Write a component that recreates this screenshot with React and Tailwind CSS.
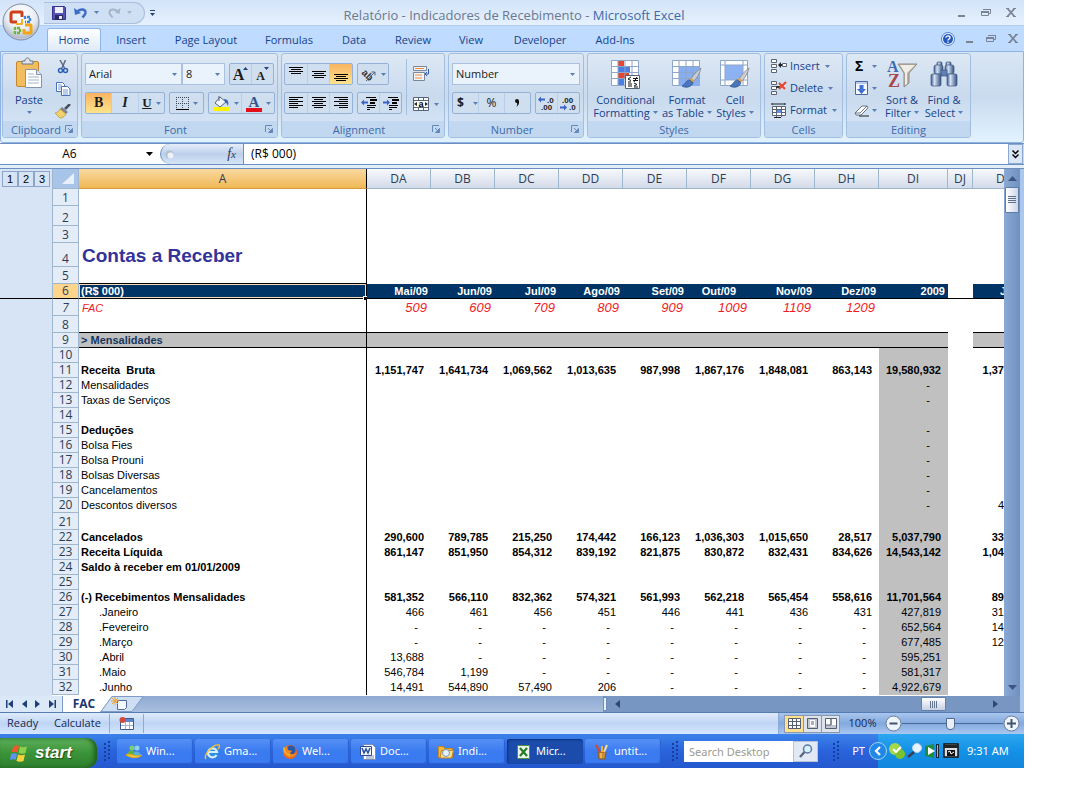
import React from "react";

const UI = "font-['Open_Sans','Noto_Sans',sans-serif]";
const SHEET = "font-['Liberation_Sans',Arial,sans-serif]";

function Down({ className = "text-[#5a7fb5]" }) {
  return (
    <svg width="5" height="3" viewBox="0 0 5 3" className={`shrink-0 ${className}`} aria-hidden="true">
      <path d="M0 0h5L2.5 3z" fill="currentColor" />
    </svg>
  );
}

function Svg({ w, h, children, className = "" }) {
  return (
    <svg width={w} height={h} viewBox={`0 0 ${w} ${h}`} className={`shrink-0 ${className}`} aria-hidden="true">
      {children}
    </svg>
  );
}

/* ---------- window chrome ---------- */

function OfficeOrb() {
  return (
    <Svg w={38} h={38}>
      <defs>
        <radialGradient id="orb" cx="50%" cy="30%" r="75%">
          <stop offset="0" stopColor="#ffffff" />
          <stop offset="0.55" stopColor="#e9edf3" />
          <stop offset="0.85" stopColor="#b3bccb" />
          <stop offset="1" stopColor="#e6ebf2" />
        </radialGradient>
      </defs>
      <circle cx="19" cy="19" r="18" fill="url(#orb)" stroke="#7d8ba3" strokeWidth="1" />
      <g fill="none" strokeLinejoin="round">
        <path d="M15 19h-5q-1 0-1-1v-7q0-2 2-2h8q1 0 1 1v4" stroke="#cf3f1c" strokeWidth="3" />
        <path d="M23 16v-2h5v5h-5" stroke="#3b86d8" strokeWidth="2.400" strokeDasharray="3 1" />
        <path d="M23 22h6v7q0 1-1 1h-6v-4" stroke="#f2a516" strokeWidth="3" />
        <path d="M13 24v6h5v-5h-5" stroke="#6fb53a" strokeWidth="2.400" strokeDasharray="3 1" />
        <path d="M14 21h6v-5" stroke="#efb229" strokeWidth="2" />
      </g>
    </Svg>
  );
}

function WindowButtons() {
  return (
    <>
      <button aria-label="Minimize" className="flex h-4 w-4 items-center justify-center">
        <Svg w={9} h={9}><path d="M1 7h7v2H1z" fill="#7a8494" /></Svg>
      </button>
      <button aria-label="Restore" className="flex h-4 w-4 items-center justify-center">
        <Svg w={10} h={9}>
          <path d="M2.500 2V1.500h7v4H8" fill="none" stroke="#7a8494" />
          <path d="M0.500 3.500h7v4h-7z" fill="none" stroke="#7a8494" />
          <path d="M0 3h8v2H0zM2 1h8v1H2z" fill="#7a8494" />
        </Svg>
      </button>
      <button aria-label="Close" className="flex h-4 w-4 items-center justify-center">
        <Svg w={10} h={9}><path d="M1.500 0.500l7 8M8.500 0.500l-7 8" stroke="#7a8494" strokeWidth="1.800" /><path d="M0 0.500h3M7 0.500h3M0 8.500h3M7 8.500h3" stroke="#7a8494" /></Svg>
      </button>
    </>
  );
}

function TitleBar() {
  return (
    <header className="flex h-[26px] items-center border-b border-[#b0cdf2] bg-linear-to-b from-[#d3e3f8] via-[#dceafb] to-[#e6f1fe] pl-[44px] pr-[5px]">
      <div className="flex h-[22px] items-center rounded-r-full border border-l-0 border-[#a9bfdd] bg-[#cfdff4] pl-2 pr-3">
        <button aria-label="Save">
          <Svg w={14} h={14}>
            <path d="M0.500 0.500h12l1 1v12h-13z" fill="#5753b5" stroke="#37338c" />
            <path d="M3 1h8v6H3z" fill="#eef1fb" />
            <path d="M3 9h8v5H3z" fill="#2c2a66" />
            <path d="M7 10h3v3H7z" fill="#e8ecf8" />
          </Svg>
        </button>
        <button aria-label="Undo" className="ml-2 flex items-center gap-[6px]">
          <Svg w={14} h={12}>
            <path d="M3 5c3-4 9-3 8.500 1c-0.300 2-2 3-3 4.500" fill="none" stroke="#3c6cc8" strokeWidth="2.400" />
            <path d="M0 1l1 7 6-2z" fill="#3c6cc8" />
          </Svg>
          <Down />
        </button>
        <button aria-label="Redo" className="ml-2 flex items-center gap-[6px]">
          <Svg w={14} h={12}>
            <path d="M11 5c-3-4-9-3-8.500 1c0.300 2 2 3 3 4.500" fill="none" stroke="#a8b4c8" strokeWidth="2" />
            <path d="M13.500 1l-1 6-5-2z" fill="#a8b4c8" />
          </Svg>
          <Down className="text-[#a8b4c8]" />
        </button>
      </div>
      <button aria-label="Customize toolbar" className="ml-[5px] flex flex-col items-center gap-[2px]">
        <span className="h-px w-[5px] bg-[#27427a]" />
        <Down className="text-[#27427a]" />
      </button>
      <h1 className="flex-1 pr-[80px] pt-1 text-center text-[13px] leading-[16px] text-[#6b7890]">
        Relatório - Indicadores de Recebimento - <span className="text-[#3e6aaa]">Microsoft Excel</span>
      </h1>
      <div className="flex items-center gap-[9px]"><WindowButtons /></div>
    </header>
  );
}

const TABS = [
  ["Insert", "w-[58px]"],
  ["Page Layout", "w-[92px]"],
  ["Formulas", "w-[74px]"],
  ["Data", "w-[56px]"],
  ["Review", "w-[62px]"],
  ["View", "w-[54px]"],
  ["Developer", "w-[84px]"],
  ["Add-Ins", "w-[66px]"],
];

function TabBar() {
  return (
    <nav className="flex h-[25px] items-end bg-[#bfdbff] pl-[47px] text-[11px] text-[#15428b]">
      <a href="#home" className="mr-px h-[23px] w-[54px] rounded-t-[3px] border border-b-0 border-[#8fb5e6] bg-linear-to-b from-white to-[#dfeaf7] text-center leading-[22px]">
        Home
      </a>
      {TABS.map(([t, w]) => (
        <a key={t} href="#ribbon" className={`${w} h-[23px] whitespace-nowrap text-center leading-[24px]`}>{t}</a>
      ))}
      <div className="flex h-full flex-1 items-center justify-end gap-[6px] pr-[3px]">
        <button aria-label="Help">
          <Svg w={14} h={14}>
            <circle cx="7" cy="7" r="6.500" fill="#e9f2ff" stroke="#5683cc" />
            <circle cx="7" cy="7" r="5" fill="#2459bd" />
            <path d="M5 5.800c0-2.700 4.200-2.500 4 0c0 1.200-2 1.200-2 2.600M7 9.400v1.400" stroke="#fff" strokeWidth="1.400" fill="none" />
          </Svg>
        </button>
        <WindowButtons />
      </div>
    </nav>
  );
}

/* ---------- ribbon ---------- */

function Group({ label, width, launcher, children }) {
  return (
    <section aria-label={label} className={`${width} flex h-[85px] shrink-0 flex-col overflow-hidden rounded-[3px] border border-[#a3bfdf] bg-linear-to-b from-[#dee8f4] via-[#c9daee] to-[#d9e8f8]`}>
      <div className="flex min-h-0 flex-1">{children}</div>
      <div className="flex h-[16px] items-center bg-[#c1d8f0] px-1 text-[11px] leading-[16px] text-[#3e6aaa]">
        <span className="flex-1 pt-px text-center">{label}</span>
        {launcher && (
          <button aria-label={`${label} options`}>
            <Svg w={8} h={8}>
              <path d="M0.500 7V0.500H7" fill="none" stroke="#6688b8" />
              <path d="M3 3l3 3M7.500 3.500v4h-4z" fill="#6688b8" stroke="#6688b8" />
            </Svg>
          </button>
        )}
      </div>
    </section>
  );
}

function Cluster({ width = "", children }) {
  return (
    <div className={`${width} flex h-[22px] shrink-0 divide-x divide-[#b9cfe9] overflow-hidden rounded-[2px] border border-[#94b1d6] bg-[#d0dff0]`}>
      {children}
    </div>
  );
}

function Tool({ label, active, children }) {
  return (
    <button aria-label={label} className={`flex flex-1 items-center justify-center gap-1 ${active ? "bg-linear-to-b from-[#f9b462] to-[#fde38c]" : ""}`}>
      {children}
    </button>
  );
}

function Pick({ id, label, value, width }) {
  return (
    <div className={`${width} relative flex h-[22px] items-center border border-[#a9c1de] bg-[#eaf2fb]`}>
      <label htmlFor={id} className="sr-only">{label}</label>
      <select id={id} defaultValue={value} className="w-full appearance-none bg-transparent pl-[3px] text-[11px] leading-[18px] text-[#1c1c1c]">
        <option>{value}</option>
      </select>
      <Down className="pointer-events-none absolute right-[4px] top-[9px] text-[#5a7fb5]" />
    </div>
  );
}

function Lines({ xs, y = 0 }) {
  return (
    <Svg w={14} h={14}>
      {xs.map(([x, w], i) => <rect key={i} x={x} y={y + i * 2} width={w} height="1" fill="#000" />)}
    </Svg>
  );
}

function AlignLines({ kind }) {
  const widths = [14, 9, 14, 9, 14, 9];
  return (
    <Svg w={14} h={12}>
      {widths.map((w, i) => (
        <rect key={i} x={kind === "left" ? 0 : kind === "center" ? Math.floor((14 - w) / 2) : 14 - w} y={i * 2} width={w} height="1" fill="#000" />
      ))}
    </Svg>
  );
}

function Indent({ out }) {
  return (
    <Svg w={16} h={13}>
      <path d="M5 0h10v1H5zM9 2h7v2H9zM9 5h5v2H9zM6 8h9v1H6zM6 10h8v1H6zM6 12h3v1H6z" fill="#000" />
      <path d={out ? "M0 5.500l3-3v2h4v2H3v2z" : "M7 5.500l-3-3v2H0v2h4v2z"} fill="#3a63c8" />
    </Svg>
  );
}

function GridIcon({ tint, brush, cond }) {
  return (
    <Svg w={30} h={29}>
      <path d="M0.500 0.500h27v25h-27z" fill="#fff" stroke="#8ea6c8" />
      {tint === "table" && <path d="M7 6h21v20H7z" fill="#86aef0" />}
      {tint === "cell" && <path d="M5 5h18v15H5z" fill="#8db2f2" />}
      {cond && (
        <>
          <path d="M7 1h6v5H7zM7 13h11v5H7z" fill="#e8472e" />
          <path d="M7 7h12v5H7zM7 19h6v6H7z" fill="#4c7fe4" />
        </>
      )}
      <path
        d={tint === "cell" ? "M5 0v26M23 0v26M0 5h28M0 20h28" : "M7 0v26M14 0v26M21 0v26M0 6.500h28M0 12.500h28M0 18.500h28"}
        fill="none" stroke="#8ea6c8"
      />
      {cond && (
        <>
          <path d="M14.500 15.500h14v13h-14z" fill="#fff" stroke="#55616f" />
          <path d="M20 17l-3 2 3 1.500M17 22h3M22 18.500h5M22 20.500h5M26 17l-3 5M17 24h4M17 26h4M23 23l3 1.500-3 1.500M23 27h4" fill="none" stroke="#111" />
        </>
      )}
      {brush && (
        <>
          <path d="M29 8c-4 3-8 7-10 11l3 2c3-3 6-8 7-13z" fill="#c9ccd2" stroke="#767c88" strokeWidth="0.700" />
          <path d="M19 18l3.500 2.500-1.500 2-3.500-2z" fill="#e8a33b" />
          <path d="M17.500 20c-3 0-4 4-7.500 6 4 2.500 10 1 11-3.500z" fill="#4a76bd" stroke="#2c4f8e" strokeWidth="0.700" />
        </>
      )}
    </Svg>
  );
}

function BigTool({ icon, lines, width }) {
  return (
    <button className={`${width} flex flex-col items-center pt-[5px] text-[11px] leading-[13px] text-[#15428b]`}>
      <span className="mb-1 flex h-[30px] items-center">{icon}</span>
      <span className="whitespace-nowrap">{lines[0]}</span>
      <span className="flex items-center gap-[3px] whitespace-nowrap">{lines[1]}<Down /></span>
    </button>
  );
}

function SmallTool({ icon, text, label }) {
  return (
    <button aria-label={label} className="flex h-[22px] items-center gap-[3px] text-[11px] text-[#15428b]">
      {icon}
      {text && <span className="pr-[2px]">{text}</span>}
      <Down />
    </button>
  );
}

function Clipboard() {
  return (
    <Group label="Clipboard" width="w-[76px]" launcher>
      <button className="flex w-[52px] flex-col items-center pt-[3px] text-[11px] leading-[14px] text-[#15428b]">
        <Svg w={28} h={32}>
          <rect x="1.500" y="4.500" width="22" height="25" rx="1.500" fill="#f1bd5e" stroke="#c4872b" />
          <path d="M7 7V4h3c0-4 5-4 5 0h3v3z" fill="#dfe3ea" stroke="#6b7585" />
          <path d="M10.500 12.500h11l5 5v13h-16z" fill="#fff" stroke="#8594ac" />
          <path d="M21.500 12.500v5h5" fill="#dbe4f2" stroke="#8594ac" />
          <path d="M13 17h6M13 20h11M13 23h11M13 26h11" stroke="#9fb2cf" />
        </Svg>
        <span className="mt-1">Paste</span>
        <Down className="mt-1 text-[#5a7fb5]" />
      </button>
      <div className="flex flex-col items-center gap-2 pt-[6px]">
        <button aria-label="Cut">
          <Svg w={14} h={14}>
            <path d="M4 0l4.500 8M9.500 0L6 8" stroke="#5b6b85" strokeWidth="1.500" />
            <circle cx="4.500" cy="10.500" r="2" fill="none" stroke="#2e5fb4" strokeWidth="1.500" />
            <circle cx="9.500" cy="10.500" r="2" fill="none" stroke="#2e5fb4" strokeWidth="1.500" />
          </Svg>
        </button>
        <button aria-label="Copy">
          <Svg w={16} h={14}>
            <path d="M1.500 0.500h6l2 2v7h-8z" fill="#fff" stroke="#4a72b8" />
            <path d="M3 3h4M3 5h4M3 7h3" stroke="#7a9bd3" />
            <path d="M6.500 4.500h6l2.500 2.500v6.500H6.500z" fill="#fff" stroke="#4a72b8" />
            <path d="M8 8h5M8 10h5M8 12h5" stroke="#7a9bd3" />
          </Svg>
        </button>
        <button aria-label="Format Painter">
          <Svg w={16} h={15}>
            <path d="M15 0l-5 5" stroke="#4b4f5c" strokeWidth="2.500" />
            <path d="M7 3l6 5-2 2-6-5z" fill="#7d828f" />
            <path d="M5 5l6 5c-2 3-4 4-6 4L0 9c2 0 4-2 5-4z" fill="#f2d36b" stroke="#b78b26" strokeWidth="0.700" />
          </Svg>
        </button>
      </div>
    </Group>
  );
}

function FontGroup() {
  const glyph = "font-['Liberation_Serif',serif] font-bold text-[#1c1c1c]";
  return (
    <Group label="Font" width="w-[197px]" launcher>
      <div className="flex flex-col gap-[7px] px-[3px] pt-[9px]">
        <div className="flex gap-1">
          <div className="flex">
            <Pick id="font-name" label="Font name" value="Arial" width="w-[97px]" />
            <Pick id="font-size" label="Font size" value="8" width="w-[43px]" />
          </div>
          <Cluster width="w-[45px]">
            <Tool label="Grow font">
              <span className={`${glyph} pt-[2px] text-[16px] leading-[18px]`}>A</span>
              <Svg w={5} h={14} className="-ml-[5px]"><path d="M0 3h5L2.500 0z" fill="#27427a" /></Svg>
            </Tool>
            <Tool label="Shrink font">
              <span className={`${glyph} pt-1 text-[12px] leading-[16px]`}>A</span>
              <Svg w={5} h={14} className="-ml-[5px]"><path d="M0 0h5L2.500 3z" fill="#27427a" /></Svg>
            </Tool>
          </Cluster>
        </div>
        <div className="flex gap-1">
          <Cluster width="w-[80px]">
            <Tool label="Bold" active><b className={`${glyph} text-[14px] leading-[18px]`}>B</b></Tool>
            <Tool label="Italic"><i className={`${glyph} text-[14px] leading-[18px]`}>I</i></Tool>
            <Tool label="Underline"><u className={`${glyph} text-[13px] leading-[18px]`}>U</u><Down /></Tool>
          </Cluster>
          <Cluster width="w-[35px]">
            <Tool label="Borders">
              <Svg w={13} h={13}>
                <path d="M0.500 0v12M6.500 0v12M12.500 0v12M0 0.500h13M0 6.500h13" stroke="#3c4658" strokeDasharray="1 1" fill="none" />
                <path d="M0 12h13v1H0z" fill="#000" />
              </Svg>
              <Down />
            </Tool>
          </Cluster>
          <Cluster width="w-[67px]">
            <Tool label="Fill color">
              <Svg w={18} h={16}>
                <path d="M8 2l6 5-6 5-5-4z" fill="#f3f6fb" stroke="#55657f" />
                <path d="M7 1v5" stroke="#55657f" />
                <path d="M12 4c4 0 5 3 4 7-1-2-1-3-3-4z" fill="#3464bd" />
                <path d="M1 12h16v4H1z" fill="#fff200" />
              </Svg>
              <Down />
            </Tool>
            <Tool label="Font color">
              <Svg w={16} h={17}>
                <text x="8" y="12" textAnchor="middle" fontFamily="Liberation Serif, serif" fontWeight="bold" fontSize="15" fill="#34568f">A</text>
                <path d="M0 13h16v4H0z" fill="#e3101c" />
              </Svg>
              <Down />
            </Tool>
          </Cluster>
        </div>
      </div>
    </Group>
  );
}

function Alignment() {
  return (
    <Group label="Alignment" width="w-[164px]" launcher>
      <div className="flex flex-col gap-[7px] pl-[2px] pt-[9px]">
        <div className="flex gap-1">
          <Cluster width="w-[69px]">
            <Tool label="Top align"><Lines y={0} xs={[[0, 14], [2, 10], [0, 14], [2, 10]]} /></Tool>
            <Tool label="Middle align"><Lines y={4} xs={[[0, 14], [2, 10], [0, 14], [2, 10]]} /></Tool>
            <Tool label="Bottom align" active><Lines y={7} xs={[[0, 14], [2, 10], [0, 14], [2, 10]]} /></Tool>
          </Cluster>
          <Cluster width="w-[32px]">
            <Tool label="Orientation">
              <Svg w={16} h={15}>
                <text x="1" y="10" transform="rotate(45 5 7)" fontFamily="Liberation Sans, sans-serif" fontWeight="bold" fontSize="10" fill="#333">ab</text>
                <path d="M5 14l9-9M10.500 5H14v3.500" stroke="#55657f" fill="none" />
              </Svg>
              <Down />
            </Tool>
          </Cluster>
        </div>
        <div className="flex gap-1">
          <Cluster width="w-[69px]">
            <Tool label="Align left"><AlignLines kind="left" /></Tool>
            <Tool label="Center"><AlignLines kind="center" /></Tool>
            <Tool label="Align right"><AlignLines kind="right" /></Tool>
          </Cluster>
          <Cluster width="w-[45px]">
            <Tool label="Decrease indent"><Indent out /></Tool>
            <Tool label="Increase indent"><Indent /></Tool>
          </Cluster>
        </div>
      </div>
      <div className="ml-1 mt-[5px] flex h-[56px] flex-col justify-between border-l border-[#a3bfdf] pb-[3px] pl-[6px] pt-[7px]">
        <button aria-label="Wrap text">
          <Svg w={16} h={15}>
            <path d="M0.500 0.500h13v4h-13z" fill="#f4f6fa" stroke="#7d8797" />
            <path d="M2 2.500h9" stroke="#e98a3c" />
            <path d="M0.500 6.500h11v8H0.500z" fill="#f4f6fa" stroke="#7d8797" />
            <path d="M2 9h7M2 12h7" stroke="#e98a3c" />
            <path d="M15.500 3v5h-3M14 6l-2 2 2 2" stroke="#2d5fb8" fill="none" />
          </Svg>
        </button>
        <button aria-label="Merge and center" className="flex items-center gap-[5px]">
          <Svg w={16} h={15}>
            <path d="M0.500 0.500h15v13H0.500z" fill="#fff" stroke="#55657f" />
            <path d="M0 3.500h16M0 10.500h16M5.500 0v3M10.500 0v3M5.500 11v3M10.500 11v3" stroke="#55657f" />
            <path d="M1 7l3-2v4zM15 7l-3-2v4z" fill="#222" />
            <text x="8" y="10" textAnchor="middle" fontFamily="Liberation Sans, sans-serif" fontWeight="bold" fontSize="9" fill="#000">a</text>
          </Svg>
          <Down />
        </button>
      </div>
    </Group>
  );
}

function NumberGroup() {
  return (
    <Group label="Number" width="w-[136px]" launcher>
      <div className="flex flex-col gap-[7px] pl-[3px] pt-[9px]">
        <Pick id="number-format" label="Number format" value="Number" width="w-[128px]" />
        <div className="flex gap-1">
          <Cluster width="w-[79px]">
            <Tool label="Currency"><b className="pl-1 pr-[5px] text-[12px] text-[#1c1c1c]">$</b><Down /></Tool>
            <Tool label="Percent"><span className="text-[12px] text-[#1c1c1c]">%</span></Tool>
            <Tool label="Comma"><Svg w={5} h={8}><path d="M0 2a2 2 0 014 0c0.500 3-1 5-3 6 1-1 1.500-2.500 1-4a2 2 0 01-2-2z" fill="#111" /></Svg></Tool>
          </Cluster>
          <Cluster width="w-[45px]">
            <Tool label="Increase decimal">
              <Svg w={17} h={15}>
                <path d="M0 3.500l3-3v2h4v2H3v2z" fill="#3a63c8" />
                <text x="9" y="7" fontFamily="Liberation Sans, sans-serif" fontWeight="bold" fontSize="8" fill="#222">.0</text>
                <text x="3" y="14" fontFamily="Liberation Sans, sans-serif" fontWeight="bold" fontSize="8" fill="#222">.00</text>
              </Svg>
            </Tool>
            <Tool label="Decrease decimal">
              <Svg w={17} h={15}>
                <text x="2" y="7" fontFamily="Liberation Sans, sans-serif" fontWeight="bold" fontSize="8" fill="#222">.00</text>
                <path d="M7 11.500l-3-3v2H0v2h4v2z" fill="#3a63c8" />
                <text x="9" y="14" fontFamily="Liberation Sans, sans-serif" fontWeight="bold" fontSize="8" fill="#222">.0</text>
              </Svg>
            </Tool>
          </Cluster>
        </div>
      </div>
    </Group>
  );
}

function CellsIcon({ kind }) {
  return (
    <Svg w={16} h={15}>
      {kind === "format" ? (
        <>
          <path d="M1.500 3.500h13v9h-13zM1.500 6.500h13M1.500 9.500h13M5.500 3v11M10.500 3v11" fill="#fff" stroke="#5a6473" />
          <path d="M6 7h4v3H6z" fill="#5d8eea" />
          <path d="M1 0v2M14 0v2M1 1h13M3 14.500h7" stroke="#222" />
        </>
      ) : (
        <>
          <path d="M0.500 0.500h5v3h-5zM0.500 5.500h5v3h-5zM0.500 10.500h5v3h-5z" fill="#fff" stroke="#5a6473" />
          {kind === "insert" ? (
            <>
              <path d="M7 6l3-3v2h1v2h-1v2z" fill="#222" />
              <path d="M11.500 4.500h4v3h-4z" fill="#fff" stroke="#5a6473" />
            </>
          ) : (
            <>
              <path d="M5 6h4" stroke="#333" strokeWidth="2" />
              <path d="M8 2l6 6M15 1l-7 7" stroke="#e8432c" strokeWidth="2" />
            </>
          )}
        </>
      )}
    </Svg>
  );
}

function Editing() {
  return (
    <Group label="Editing" width="w-[125px]">
      <div className="flex flex-col gap-0 pl-[7px] pt-[1px]">
        <SmallTool label="Sum" icon={<b className="w-[15px] pl-px text-left text-[14px] leading-[16px] text-black">Σ</b>} />
        <SmallTool
          label="Fill"
          icon={
            <Svg w={15} h={15}>
              <path d="M1.500 0.500h12v13h-12z" fill="#f5f9ff" stroke="#49679a" />
              <path d="M2 1h11v2H2z" fill="#b8cdec" />
              <path d="M5.500 4h4v4H12l-4.500 5L3 8h2.500z" fill="#3b70d6" />
            </Svg>
          }
        />
        <SmallTool
          label="Clear"
          icon={
            <Svg w={15} h={13}>
              <path d="M1 9l7-7h5c1 0 1 2 0 3l-6 6H2z" fill="#fff" stroke="#6b7585" />
              <path d="M1 9h5l7-7" fill="none" stroke="#6b7585" />
              <path d="M5 12h10" stroke="#222" />
            </Svg>
          }
        />
      </div>
      <div className="flex pl-[6px]">
        <BigTool
          width="w-[38px]"
          lines={["Sort &", "Filter"]}
          icon={
            <Svg w={30} h={30}>
              <path d="M11 5h19l-8 9v10l-5 4v-14z" fill="#b9b4a8" stroke="#8f8b82" />
              <path d="M13 6h15l-8 8v11l-2 1v-12z" fill="#efede6" />
              <text x="0" y="13" fontFamily="Liberation Serif, serif" fontWeight="bold" fontSize="16" fill="#3d6ab8">A</text>
              <text x="1" y="28" fontFamily="Liberation Serif, serif" fontWeight="bold" fontSize="18" fill="#a8484a">Z</text>
            </Svg>
          }
        />
        <BigTool
          width="w-[46px]"
          lines={["Find &", "Select"]}
          icon={
            <Svg w={28} h={26}>
              <defs>
                <linearGradient id="bin" x1="0" x2="1" y1="0" y2="0">
                  <stop offset="0" stopColor="#3c5c96" />
                  <stop offset="0.35" stopColor="#d5e2f5" />
                  <stop offset="1" stopColor="#33507f" />
                </linearGradient>
              </defs>
              <g stroke="#3e567f" strokeWidth="0.700">
                <rect x="7" y="1" width="5" height="4" rx="1" fill="url(#bin)" />
                <rect x="16" y="1" width="5" height="4" rx="1" fill="url(#bin)" />
                <rect x="4" y="4" width="9" height="9" rx="2" fill="url(#bin)" />
                <rect x="15" y="4" width="9" height="9" rx="2" fill="url(#bin)" />
                <rect x="11" y="9" width="6" height="6" fill="#5f7fb5" />
                <rect x="1" y="13" width="10" height="12" rx="1.500" fill="url(#bin)" />
                <rect x="17" y="13" width="10" height="12" rx="1.500" fill="url(#bin)" />
              </g>
            </Svg>
          }
        />
      </div>
    </Group>
  );
}

function Ribbon() {
  return (
    <div className="flex h-[92px] gap-[3px] overflow-hidden rounded-b-[3px] border border-[#8db2e3] bg-linear-to-b from-[#d8e5f4] via-[#cadbef] to-[#e2f2ff] px-px pt-px">
      <Clipboard />
      <FontGroup />
      <Alignment />
      <NumberGroup />
      <Group label="Styles" width="w-[174px]">
        <div className="flex gap-[3px] pl-1">
          <BigTool width="w-[67px]" lines={["Conditional", "Formatting"]} icon={<GridIcon cond />} />
          <BigTool width="w-[50px]" lines={["Format", "as Table"]} icon={<GridIcon tint="table" brush />} />
          <BigTool width="w-[40px]" lines={["Cell", "Styles"]} icon={<GridIcon tint="cell" brush />} />
        </div>
      </Group>
      <Group label="Cells" width="w-[79px]">
        <div className="flex flex-col pl-[6px] pt-[1px]">
          <SmallTool icon={<CellsIcon kind="insert" />} text="Insert" />
          <SmallTool icon={<CellsIcon kind="delete" />} text="Delete" />
          <SmallTool icon={<CellsIcon kind="format" />} text="Format" />
        </div>
      </Group>
      <Editing />
    </div>
  );
}

function FormulaBar() {
  return (
    <div className="flex h-[26px] items-start border-b border-[#6c8fc0] bg-[#e3eefb]">
      <div className="flex h-[22px] w-full items-stretch border-y border-[#6c8fc0] bg-white text-[12px]">
        <div className="flex w-[160px] items-center pr-[7px]">
          <input aria-label="Name box" defaultValue="A6" className="w-full min-w-0 bg-transparent pr-[7px] text-center leading-[18px] text-black outline-none" />
          <button aria-label="Name list"><Svg w={7} h={4}><path d="M0 0h7L3.500 4z" fill="#000" /></Svg></button>
        </div>
        <div className="flex w-[84px] items-center justify-between rounded-l-full border border-y-0 border-[#6c8fc0] bg-linear-to-b from-[#e6eef9] via-[#bcd0ec] to-[#d6e4f6] pl-1 pr-[7px]">
          <Svg w={9} h={9}><circle cx="4.500" cy="4.500" r="4" fill="#b5bfd0" /><circle cx="5.500" cy="5.500" r="3" fill="#eef2f8" /></Svg>
          <button aria-label="Insert function" className="font-['Liberation_Serif',serif] text-[14px] leading-[16px] text-[#2c3a52]"><i>f<span className="text-[11px]">x</span></i></button>
        </div>
        <input aria-label="Formula" defaultValue="(R$ 000)" className="min-w-0 flex-1 bg-transparent pl-[7px] leading-[18px] text-black outline-none" />
        <button aria-label="Expand formula bar" className="flex w-[15px] items-center justify-center border border-[#8aa8d2] bg-[#dbe7f6]">
          <Svg w={7} h={9}><path d="M0.500 0.500l3 3 3-3M0.500 4.500l3 3 3-3" stroke="#000" strokeWidth="1.500" fill="none" /></Svg>
        </button>
        <div className="w-px bg-[#bfdbff]" />
      </div>
    </div>
  );
}

/* ---------- worksheet ---------- */

const COLS = ["DA", "DB", "DC", "DD", "DE", "DF", "DG", "DH", "DI", "DJ", "D"];
const D = "-";
const none = ["", "", "", "", "", "", "", ""];
const dashes = (n) => Array(n).fill(D);

const ROWS = [
  { n: 10 },
  { n: 11, a: "Receita  Bruta", bold: true, v: ["1,151,747", "1,641,734", "1,069,562", "1,013,635", "987,998", "1,867,176", "1,848,081", "863,143"], t: "19,580,932", k: "1,37" },
  { n: 12, a: "Mensalidades", t: D },
  { n: 13, a: "Taxas de Serviços", t: D },
  { n: 14 },
  { n: 15, a: "Deduções", bold: true, t: D },
  { n: 16, a: "Bolsa Fies", t: D },
  { n: 17, a: "Bolsa Prouni", t: D },
  { n: 18, a: "Bolsas Diversas", t: D },
  { n: 19, a: "Cancelamentos", t: D },
  { n: 20, a: "Descontos diversos", t: D, k: "4" },
  { n: 21, tall: true },
  { n: 22, a: "Cancelados", bold: true, v: ["290,600", "789,785", "215,250", "174,442", "166,123", "1,036,303", "1,015,650", "28,517"], t: "5,037,790", k: "33" },
  { n: 23, a: "Receita Líquida", bold: true, v: ["861,147", "851,950", "854,312", "839,192", "821,875", "830,872", "832,431", "834,626"], t: "14,543,142", k: "1,04" },
  { n: 24, a: "Saldo à receber em 01/01/2009", bold: true },
  { n: 25 },
  { n: 26, a: "(-) Recebimentos Mensalidades", bold: true, v: ["581,352", "566,110", "832,362", "574,321", "561,993", "562,218", "565,454", "558,616"], t: "11,701,564", k: "89" },
  { n: 27, a: ".Janeiro", sub: true, v: ["466", "461", "456", "451", "446", "441", "436", "431"], t: "427,819", k: "31" },
  { n: 28, a: ".Fevereiro", sub: true, v: dashes(8), t: "652,564", k: "14" },
  { n: 29, a: ".Março", sub: true, v: dashes(8), t: "677,485", k: "12" },
  { n: 30, a: ".Abril", sub: true, v: ["13,688", ...dashes(7)], t: "595,251" },
  { n: 31, a: ".Maio", sub: true, v: ["546,784", "1,199", ...dashes(6)], t: "581,317" },
  { n: 32, a: ".Junho", sub: true, v: ["14,491", "544,890", "57,490", "206", ...dashes(4)], t: "4,922,679" },
];

const MONTHS = ["Mai/09", "Jun/09", "Jul/09", "Ago/09", "Set/09", "Out/09", "Nov/09", "Dez/09"];
const CODES = ["509", "609", "709", "809", "909", "1009", "1109", "1209"];

function RowHead({ n, active, edge }) {
  return (
    <th
      scope="row"
      className={`border-b border-l border-r border-l-[#9eb6ce] border-r-[#9eb6ce] p-0 align-bottom text-[12px] font-normal leading-[14px] text-[#2b3d54] ${UI} ${edge ? "border-b-black" : "border-b-[#9eb6ce]"} ${active ? "bg-[#ffd58d]" : "bg-[#e4ecf7]"}`}
    >
      {n}
    </th>
  );
}

function Blank({ n, height, line }) {
  const rule = line ? "border-b border-black" : "";
  return (
    <tr className={height}>
      <RowHead n={n} />
      <td className={`border-r border-r-black p-0 ${rule}`} />
      {[...none, ""].map((_, i) => <td key={i} className={`p-0 ${n === 8 ? rule : ""}`} />)}
      <td className="p-0" />
      <td className={`p-0 ${n === 8 ? rule : ""}`} />
    </tr>
  );
}

function Sheet() {
  return (
    <table className={`w-full table-fixed border-separate border-spacing-0 bg-white text-[11px] leading-[14px] text-black ${SHEET}`}>
      <colgroup>
        <col className="w-[27px]" />
        <col />
        {none.map((_, i) => <col key={i} className="w-[64px]" />)}
        <col className="w-[69px]" />
        <col className="w-[25px]" />
        <col className="w-[31px]" />
      </colgroup>
      <thead>
        <tr className={`h-[20px] text-[12px] text-[#2b3d54] ${UI}`}>
          <th className="border-b border-l border-r border-[#9eb6ce] bg-[#a9c4e9] p-0" aria-label="Select all">
            <Svg w={12} h={11} className="ml-auto mr-1"><path d="M12 0v11H0z" fill="#e6effa" /></Svg>
          </th>
          <th className="border-b border-r border-b-[#d69b3c] border-r-black bg-linear-to-b from-[#f9d99f] to-[#f1b853] p-0 font-normal">A</th>
          {COLS.map((c, i) => (
            <th key={c} className={`overflow-hidden border-b border-[#9eb6ce] bg-linear-to-b from-[#f7f9fc] to-[#d3dbe9] p-0 font-normal ${i === 10 ? "pl-[23px] text-left" : "border-r text-center"}`}>{c}</th>
          ))}
        </tr>
      </thead>
      <tbody>
        <Blank n={1} height="h-[17px]" />
        <Blank n={2} height="h-[20px]" />
        <Blank n={3} height="h-[17px]" />
        <tr className="h-[24px]">
          <RowHead n={4} />
          <td className="border-r border-black p-0 pl-[3px] align-bottom text-[19px] font-bold leading-[23px] text-[#333399]">Contas a Receber</td>
          {COLS.map((c) => <td key={c} className="p-0" />)}
        </tr>
        <Blank n={5} height="h-[17px]" line />
        <tr className="h-[15px] font-bold text-white">
          <RowHead n={6} active edge />
          <td className="relative border-b border-r border-black bg-[#003366] p-0">
            <div className="border border-[#f6dcb8] pl-px leading-[12px]">(R$ 000)</div>
            <span className="absolute -bottom-[2px] -right-px h-1 w-1 border-l border-t border-white bg-black" />
          </td>
          {MONTHS.map((m) => (
            <td key={m} className={`border-b border-black bg-[#003366] p-0 text-right ${m === "Out/09" ? "pr-[15px]" : "pr-[3px]"}`}>{m}</td>
          ))}
          <td className="border-b border-black bg-[#003366] p-0 pr-[3px] text-right">2009</td>
          <td className="border-b border-black p-0" />
          <td className="overflow-hidden border-b border-black bg-[#003366] p-0 pl-[27px]">J</td>
        </tr>
        <tr className="h-[17px] italic text-[#ee1c25]">
          <RowHead n={7} />
          <td className="border-r border-r-black p-0 pl-[3px]">FAC</td>
          {CODES.map((c) => <td key={c} className="p-0 pr-1 text-right text-[13px]">{c}</td>)}
          <td className="p-0" /><td className="p-0" /><td className="p-0" />
        </tr>
        <Blank n={8} height="h-[17px]" line />
        <tr className="h-[15px] bg-[#c0c0c0]">
          <RowHead n={9} />
          <td className="border-b border-r border-black p-0 pl-[2px] font-bold text-[#17365d]">&gt; Mensalidades</td>
          {[...none, ""].map((_, i) => <td key={i} className="border-b border-black p-0" />)}
          <td className="bg-white p-0" />
          <td className="border-b border-black p-0" />
        </tr>
        {ROWS.map((r) => (
          <tr key={r.n} className={`align-top ${r.tall ? "h-[17px]" : "h-[15px]"} ${r.bold ? "font-bold" : ""}`}>
            <RowHead n={r.n} />
            <td className={`whitespace-pre border-r border-r-black p-0 ${r.sub ? "pl-[20px]" : "pl-[2px]"}`}>{r.a}</td>
            {(r.v || none).map((v, i) => (
              <td key={i} className={`p-0 text-right ${v === D ? "pr-[13px]" : "pr-[7px]"}`}>{v}</td>
            ))}
            <td className={`bg-[#c0c0c0] p-0 text-right ${r.t === D ? "pr-[18px] font-normal" : "pr-[7px]"}`}>{r.t}</td>
            <td className="p-0" />
            <td className="overflow-hidden p-0 text-right">{r.k}</td>
          </tr>
        ))}
      </tbody>
    </table>
  );
}

function Worksheet() {
  return (
    <main className="flex">
      <div className="w-[52px] shrink-0 bg-[#d6e4f5]">
        <div className={`flex h-[20px] items-center pl-[2px] text-[11px] text-black ${SHEET}`}>
          {[1, 2, 3].map((n) => (
            <button key={n} className="h-[16px] w-[16px] border border-[#8ba5c9] leading-[14px]">{n}</button>
          ))}
        </div>
        <div className="h-[110px] border-b border-black" />
      </div>
      <div className="min-w-0 flex-1 bg-white pb-px"><Sheet /></div>
      <div className="flex w-[16px] shrink-0 flex-col items-center bg-linear-to-r from-[#8aa9d4] to-[#7090bf]">
        <button aria-label="Scroll up" className="flex h-[18px] items-center"><Svg w={9} h={5}><path d="M0 5h9L4.500 0z" fill="#3d5580" /></Svg></button>
        <div className="flex h-[26px] w-[14px] items-center justify-center rounded-[1px] border border-[#5f7ba8] bg-linear-to-r from-white to-[#cdd6e6]">
          <Svg w={8} h={8}><path d="M0 0.500h8M0 2.500h8M0 4.500h8M0 6.500h8" stroke="#5f6f8c" /></Svg>
        </div>
        <div className="flex-1" />
        <button aria-label="Scroll down" className="flex h-[18px] items-center"><Svg w={9} h={5}><path d="M0 0h9L4.500 5z" fill="#3d5580" /></Svg></button>
      </div>
      <div className="w-[4px] shrink-0 bg-[#a9c7ef]" />
    </main>
  );
}

function SheetTabs() {
  const arrow = "#1f3f77";
  return (
    <div className="flex h-[16px] bg-[#a9c7ef]">
      <div className="flex w-[62px] shrink-0 items-center justify-between bg-[#dbe8f8] pl-[6px] pr-[6px]">
        <button aria-label="First sheet"><Svg w={7} h={8}><path d="M0 0h1.500v8H0zM7 0v8L2 4z" fill={arrow} /></Svg></button>
        <button aria-label="Previous sheet"><Svg w={5} h={8}><path d="M5 0v8L0 4z" fill={arrow} /></Svg></button>
        <button aria-label="Next sheet"><Svg w={5} h={8}><path d="M0 0v8l5-4z" fill={arrow} /></Svg></button>
        <button aria-label="Last sheet"><Svg w={7} h={8}><path d="M5.500 0H7v8H5.500zM0 0v8l5-4z" fill={arrow} /></Svg></button>
      </div>
      <button className="w-[38px] shrink-0 border-l border-[#7f9cc8] bg-white pl-[5px] text-center text-[12px] font-bold leading-[16px] text-[#15366f]">FAC</button>
      <div className="flex min-w-0 flex-1 basis-0 bg-linear-to-b from-[#8fa9d2] to-[#a9bfe0]">
        <button aria-label="Insert sheet">
          <Svg w={45} h={16}>
            <path d="M0 0h12L1 15H0z" fill="#fff" />
            <path d="M12 0.500h31L32 15.500H1z" fill="#cfdff3" stroke="#7f9cc8" />
            <path d="M17.500 4.500h9v7l-2 2h-7z" fill="#f4f8ff" stroke="#50699a" />
            <path d="M15 1v8M11 5h8M12 2l6 6M18 2l-6 6" stroke="#eea02a" />
          </Svg>
        </button>
      </div>
      <div className="flex w-[417px] shrink-0 items-center bg-[#7896c2] pr-[22px]">
        <div className="h-[14px] w-[4px] border border-[#6f8fc0] bg-[#e7f0fb]" />
        <button aria-label="Scroll left" className="ml-2"><Svg w={5} h={8}><path d="M5 0v8L0 4z" fill="#33486e" /></Svg></button>
        <div className="flex-1" />
        <div className="mr-[47px] flex h-[14px] w-[25px] items-center justify-center rounded-[1px] border border-[#6580ab] bg-linear-to-b from-white to-[#c5d0e2]">
          <Svg w={8} h={7}><path d="M0.500 0v7M2.500 0v7M4.500 0v7M6.500 0v7" stroke="#65748f" /></Svg>
        </div>
        <button aria-label="Scroll right"><Svg w={5} h={8}><path d="M0 0v8l5-4z" fill="#33486e" /></Svg></button>
      </div>
      <div className="w-[4px] shrink-0" />
    </div>
  );
}

function ZoomButton({ label, plus }) {
  return (
    <button aria-label={label}>
      <Svg w={17} h={17}>
        <circle cx="8.500" cy="8.500" r="7.500" fill="#eef4fb" stroke="#6a7c99" />
        <path d={plus ? "M4 8.500h9M8.500 4v9" : "M4.500 8.500h8"} stroke="#44546e" strokeWidth="2" />
      </Svg>
    </button>
  );
}

function StatusBar() {
  return (
    <div className="flex h-[22px] items-center border-t border-[#567db1] bg-linear-to-b from-[#dfebfa] via-[#bfd5f5] to-[#d6e8ff] pl-[7px] text-[11px] text-[#15294f]">
      <span className="w-[47px]">Ready</span>
      <span className="w-[55px]">Calculate</span>
      <div className="flex h-[19px] w-[35px] items-center justify-center border-x border-[#8fabd2]">
        <button aria-label="Record macro">
          <Svg w={15} h={13}>
            <path d="M1.500 1.500h13v11h-13z" fill="#fff" stroke="#43598a" />
            <path d="M2 2h12v3H2z" fill="#5f86c9" />
            <path d="M2 8.500h12M6.500 5v7M10.500 5v7" stroke="#9db3d6" />
            <circle cx="3.500" cy="3" r="3" fill="#cf4b3d" />
          </Svg>
        </button>
      </div>
      <div className="flex-1" />
      <div className="flex h-full items-center border-l border-[#8fabd2] bg-linear-to-b from-[#a9c6ee] via-[#83a9de] to-[#a9c8f2] pl-[5px] pr-[4px]">
        <div className="flex h-[18px] divide-x divide-[#8a97ad] border border-[#8a97ad] bg-[#dde3ec]">
          <button aria-label="Normal view" className="flex w-[19px] items-center justify-center bg-[#ffe08f]">
            <Svg w={13} h={11}><path d="M0.500 0.500h12v10h-12zM0 3.500h13M0 7.500h13M4.500 0v11M8.500 0v11" fill="#fff" stroke="#54606f" /></Svg>
          </button>
          <button aria-label="Page layout view" className="flex w-[18px] items-center justify-center">
            <Svg w={11} h={11}><path d="M0.500 0.500h10v10h-10z" fill="#bfc6d1" stroke="#54606f" /><path d="M3 2h5v7H3z" fill="#fff" /><path d="M4 4h3M4 6h3" stroke="#54606f" /></Svg>
          </button>
          <button aria-label="Page break view" className="flex w-[17px] items-center justify-center">
            <Svg w={12} h={11}><path d="M0.500 0.500h11v10h-11z" fill="#bfc6d1" stroke="#54606f" /><path d="M1 1h4v6H1zM7 1h4v6H7z" fill="#fff" /><path d="M6 0v7H0" fill="none" stroke="#54606f" /></Svg>
          </button>
        </div>
        <button className="w-[45px] text-center">100%</button>
        <ZoomButton label="Zoom out" />
        <input
          type="range"
          aria-label="Zoom"
          defaultValue="48"
          className="h-[14px] w-[101px] appearance-none bg-transparent bg-[linear-gradient(#4d6a99,#4d6a99)] bg-[length:100%_1px] bg-center bg-no-repeat [&::-webkit-slider-thumb]:h-[12px] [&::-webkit-slider-thumb]:w-[9px] [&::-webkit-slider-thumb]:appearance-none [&::-webkit-slider-thumb]:rounded-b-[4px] [&::-webkit-slider-thumb]:border [&::-webkit-slider-thumb]:border-[#55698c] [&::-webkit-slider-thumb]:bg-[#e8eff9]"
        />
        <ZoomButton label="Zoom in" plus />
      </div>
    </div>
  );
}

/* ---------- taskbar ---------- */

const TASKS = [
  { t: "Win...", icon: <><circle cx="6" cy="4" r="2.500" fill="#7fd06a" /><circle cx="11" cy="4" r="2.500" fill="#8fd3f2" /><path d="M1 12c0-7 8-7 9-1z" fill="#5fae46" /><path d="M7 12c0-6 7-6 8 0z" fill="#5ab0dc" /><path d="M0 11c4-3 9 3 16 0-4 4-11 3-16 0z" fill="#f1c93c" stroke="#e2a81e" /></> },
  { t: "Gma...", icon: <><circle cx="8.500" cy="8.500" r="6.500" fill="#2f8fe0" /><path d="M12.500 11a4.500 4.500 0 11.500-3H5" fill="none" stroke="#d4eeff" strokeWidth="2.200" /><path d="M2 15C-1 11 9 0 15 1c1 1 0 3-1 4" fill="none" stroke="#f1c232" strokeWidth="1.400" /></> },
  { t: "Wel...", icon: <><circle cx="8" cy="8" r="7" fill="#e8641b" /><circle cx="9" cy="6" r="4.500" fill="#2b57a8" /><path d="M1 5c0 10 12 11 14 3-2 3-6 3-7 1l2-2-4-1-1-4z" fill="#f08a1d" /><path d="M2 3c0 5 3 8 6 8" stroke="#ffc83c" fill="none" /></> },
  { t: "Doc...", icon: <><path d="M3.500 0.500h9l3 3v12h-12z" fill="#fff" stroke="#7a8bb5" /><path d="M6 12h8M6 14h8" stroke="#7a8bb5" /><path d="M0.500 2.500h11v9H0.500z" fill="#f0f4fc" stroke="#2c4f9c" /><path d="M2 4l2 5 2-4 2 4 2-5" stroke="#2c4f9c" fill="none" strokeWidth="1.500" /></> },
  { t: "Indi...", icon: <><path d="M0.500 2.500h5l1 2h8v9h-14z" fill="#f2b93b" stroke="#c6851d" /><path d="M3.500 6.500h12l-2 7.500H2z" fill="#fbe28c" stroke="#c6851d" /><circle cx="8" cy="9" r="3.500" fill="#e4f4ff" stroke="#7c95b5" /></> },
  { t: "Micr...", active: true, icon: <><path d="M1.500 1.500h12v13h-12z" fill="#e9f5e6" stroke="#4f9148" /><path d="M4 4h7v8H4z" fill="#fff" /><path d="M4 4l7 8M11 4l-7 8" stroke="#2b7d2b" strokeWidth="2.400" /></> },
  { t: "untit...", icon: <><path d="M4 8h8l-1 7H5z" fill="#c98a3a" stroke="#8d5a1d" /><path d="M6 8L2 1" stroke="#d8452e" strokeWidth="2" /><path d="M8 8V2" stroke="#e7b13b" strokeWidth="2" /><path d="M10 8l3-7" stroke="#f0d9a8" strokeWidth="2" /><path d="M7 14V9" stroke="#f0c060" strokeWidth="1.500" /></> },
];

function Grip() {
  return (
    <Svg w={6} h={20}>
      {[0, 4, 8, 12, 16].map((y) => (
        <g key={y} fill="#153f9e"><rect x="0" y={y + 2} width="2" height="2" /><rect x="4" y={y} width="2" height="2" /></g>
      ))}
    </Svg>
  );
}

function Taskbar() {
  return (
    <footer className="flex h-[34px] items-stretch bg-linear-to-b from-[#3c82ea] via-[#2a63dc] to-[#2458ce] font-['Noto_Sans',sans-serif] text-[11px] text-white">
      <button className="mt-1 flex w-[97px] shrink-0 items-center gap-[6px] rounded-r-[10px] bg-linear-to-b from-[#5fae5b] via-[#3a9438] to-[#2e7f2d] pl-[10px] shadow-[inset_-3px_0_4px_#1f5f1f]">
        <Svg w={19} h={18}>
          <path d="M3 3c2-2 4-2 6-1L7.500 8.500c-2-1-4-1-6 0z" fill="#ee5a2c" />
          <path d="M10 2.500c2 1 4 1 7 0L15.500 9c-2 1-5 1-7 0z" fill="#8bd048" />
          <path d="M1 10c2-1 4-1 6 0L5.500 16c-2-1-4-1-5.500 0z" fill="#5e93f2" />
          <path d="M8 10.500c2 1 5 1 7 0L13.500 17c-2 1-5 1-7 0z" fill="#fbd03b" />
        </Svg>
        <span className={`text-[17px] font-bold italic leading-[24px] [text-shadow:1px_1px_1px_#1c4f1c] ${SHEET}`}>start</span>
      </button>
      <div className="flex w-[20px] shrink-0 items-center justify-center"><Grip /></div>
      <div className="flex shrink-0 items-center gap-[2px] pt-px">
        {TASKS.map((k) => (
          <button
            key={k.t}
            className={`flex h-[25px] w-[76px] items-center gap-1 rounded-[3px] pl-[9px] ${k.active ? "bg-[#1c4cab] shadow-[inset_1px_1px_2px_#0c2f7d]" : "bg-linear-to-b from-[#5590f5] via-[#3b7bf0] to-[#3a7af2] shadow-[inset_-1px_-1px_1px_#2a5fd0]"}`}
          >
            <Svg w={16} h={16}>{k.icon}</Svg>
            <span>{k.t}</span>
          </button>
        ))}
      </div>
      <div className="min-w-0 flex-1" />
      <div className="flex shrink-0 items-center pr-[6px]"><Grip /></div>
      <form className="flex shrink-0 items-center" onSubmit={(e) => e.preventDefault()}>
        <label htmlFor="desktop-search" className="sr-only">Search Desktop</label>
        <input id="desktop-search" placeholder="Search Desktop" className="h-[21px] w-[109px] bg-white pl-[5px] text-[11px] placeholder:text-[#9c9a8c]" />
        <button aria-label="Search" className="flex h-[21px] w-[25px] items-center justify-center border border-[#b9c4da] bg-[#e2e9f5]">
          <Svg w={14} h={14}><circle cx="8.500" cy="5" r="4" fill="#d8efff" stroke="#5c7aa8" strokeWidth="1.500" /><path d="M5.500 8L1 13" stroke="#5c6a80" strokeWidth="2.500" /></Svg>
        </button>
      </form>
      <div className="flex w-[24px] shrink-0 items-center justify-end pr-[3px]"><Grip /></div>
      <button className="w-[36px] shrink-0 pr-[13px] text-right">PT</button>
      <div className="flex w-[146px] shrink-0 items-center gap-[2px] bg-linear-to-b from-[#2ba6f0] via-[#1391e6] to-[#1187dc]">
        <button aria-label="Show hidden icons" className="-ml-[9px]">
          <Svg w={18} h={18}><circle cx="9" cy="9" r="8.500" fill="#2288e8" stroke="#9fd0fa" /><path d="M11 5L7 9l4 4" stroke="#fff" strokeWidth="2.200" fill="none" /></Svg>
        </button>
        <Svg w={16} h={16}><circle cx="6" cy="6" r="6" fill="#a6d84a" /><circle cx="11" cy="11" r="5" fill="#7cc22f" /><path d="M4 6l3 3 5-5" stroke="#fff" strokeWidth="2" fill="none" /></Svg>
        <Svg w={16} h={16}><circle cx="10" cy="5" r="4.500" fill="#e8f4ff" stroke="#b9cfe8" /><path d="M7 9l-6 5" stroke="#3c3c50" strokeWidth="2.500" /></Svg>
        <Svg w={16} h={16}><path d="M0 3l9-2v14l-9-2z" fill="#218c3c" /><path d="M3 4l7 4-7 4z" fill="#fff" /><path d="M11 1h3v14h-3z" fill="#1b2433" /><path d="M12.500 2v12" stroke="#6be07b" /></Svg>
        <Svg w={16} h={16}><path d="M1 1h14v13H1z" fill="#d9dde5" stroke="#111" strokeWidth="1.500" /><path d="M1 2h14v3H1z" fill="#222" /><path d="M4 7h8v6H4z" fill="#111" /><path d="M5 9l2-1 1 3 3-2" stroke="#fff" fill="none" /></Svg>
        <time className="ml-[6px] whitespace-nowrap">9:31 AM</time>
      </div>
    </footer>
  );
}

export default function App() {
  return (
    <div className="min-h-screen bg-white pr-[66px]">
      <div className={`relative ${UI}`}>
        <TitleBar />
        <TabBar />
        <button aria-label="Office menu" className="absolute left-[2px] top-[3px]"><OfficeOrb /></button>
        <Ribbon />
        <FormulaBar />
        <Worksheet />
        <SheetTabs />
        <StatusBar />
        <Taskbar />
      </div>
    </div>
  );
}
